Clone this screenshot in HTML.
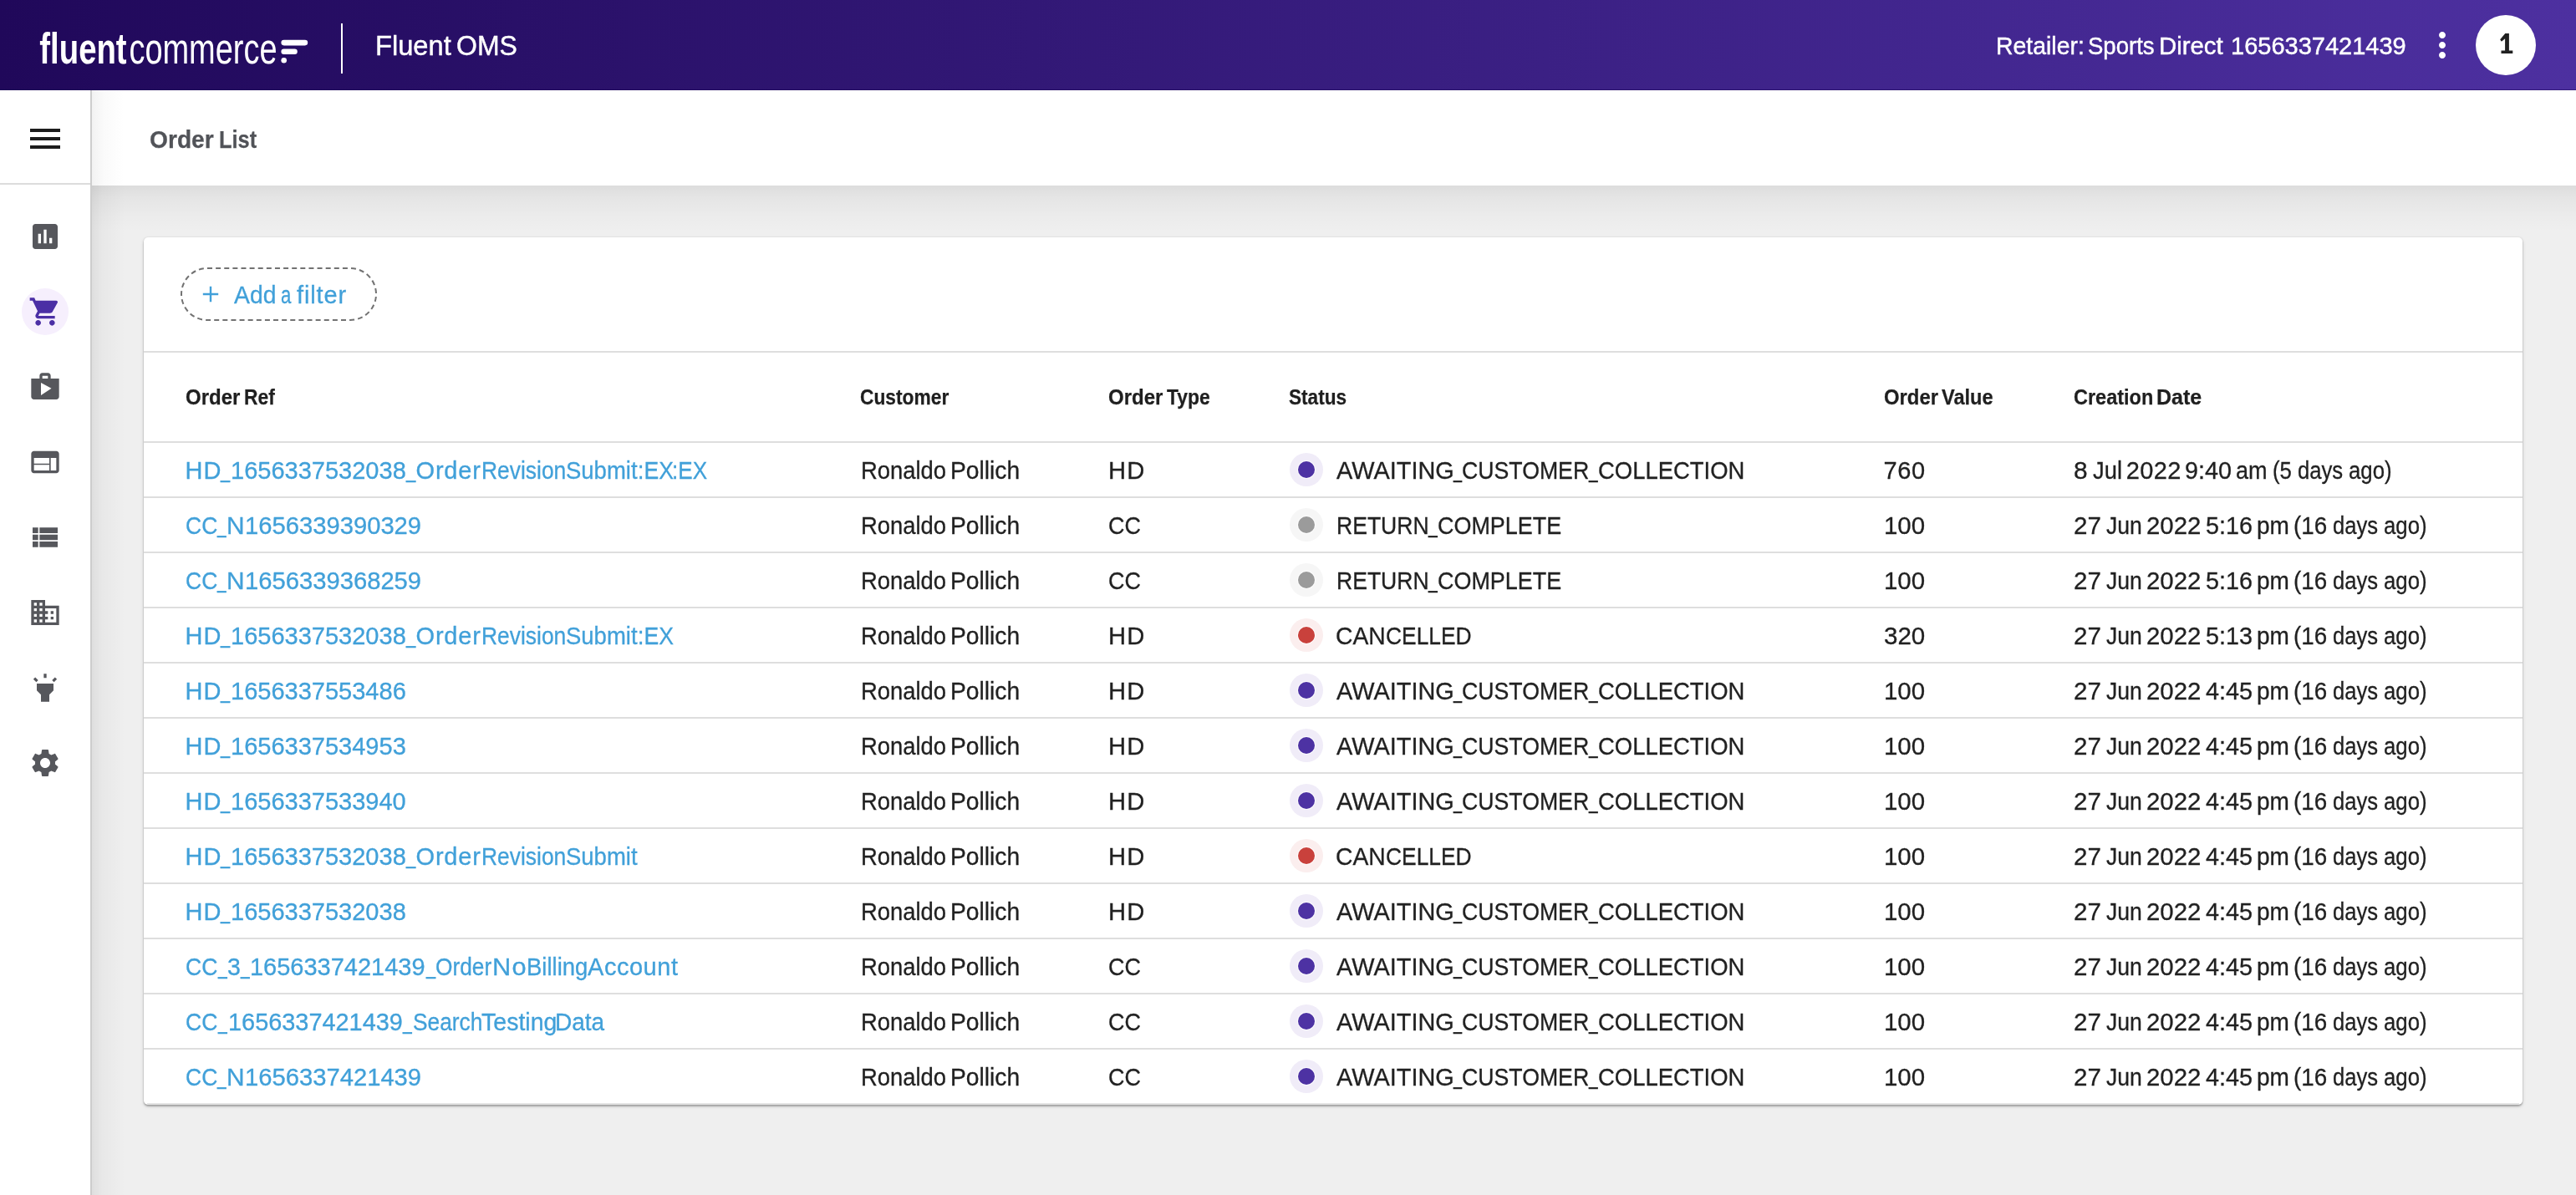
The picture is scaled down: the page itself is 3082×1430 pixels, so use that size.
<!DOCTYPE html>
  <html lang="en"><head><meta charset="utf-8"><title>Fluent OMS - Order List</title>
  <style>
  *{margin:0;padding:0;box-sizing:border-box}
  html,body{width:3082px;height:1430px;overflow:hidden;background:#efefef;font-family:"Liberation Sans",sans-serif}
  body{position:relative}
  .t{position:absolute;white-space:pre;line-height:1;display:block;transform-origin:0 0;-webkit-text-stroke:.3px currentColor}
  .t.b{-webkit-text-stroke:.25px currentColor}
.t.w{-webkit-text-stroke:.45px currentColor}
  i{position:absolute;display:block}
  #top{position:absolute;left:0;top:0;width:3082px;height:108px;background:linear-gradient(90deg,#20085a 0%,#4d30a0 100%);box-shadow:inset 0 -1px 0 rgba(20,0,80,.45)}
  #side{position:absolute;left:0;top:108px;width:110px;height:1322px;background:#fff;border-right:2px solid #cdcdcd}
  #side .mb{left:0;top:111px;width:108px;height:2px;background:#dcdcdc}
  #sub{position:absolute;left:110px;top:108px;width:2972px;height:114px;background:linear-gradient(90deg,#f2f2f2 0,#fafafa 14px,#fff 38px)}
  #main{position:absolute;left:110px;top:222px;width:2972px;height:1208px;background:
    linear-gradient(180deg,rgba(0,0,0,.08) 0,rgba(0,0,0,.045) 14px,rgba(0,0,0,.015) 36px,rgba(0,0,0,0) 56px),
    linear-gradient(90deg,rgba(0,0,0,.07) 0,rgba(0,0,0,.03) 12px,rgba(0,0,0,0) 40px),#efefef}
  #card{position:absolute;left:172px;top:284px;width:2846px;height:1038px;background:#fff;border-radius:5px;
    box-shadow:0 2px 2px rgba(0,0,0,.25),0 2px 5px rgba(0,0,0,.10),0 0 2px rgba(0,0,0,.12)}
  .ln{left:172px;width:2846px;height:2px;background:#dedede}
  .halo{left:1543px;width:40px;height:40px;border-radius:50%}
  .dot{left:1553px;width:20px;height:20px;border-radius:50%;box-shadow:0 0 0 1px rgba(255,255,255,.75)}
  .ic{position:absolute;left:34px;width:40px;height:40px}
  .sel{left:26px;width:56px;height:56px;border-radius:50%;background:#f6effd}
  #txt{position:absolute;left:0;top:0;width:3082px;height:1430px;will-change:transform;z-index:5}
  #pill{position:absolute;left:216px;top:320px;width:235px;height:64px}
  </style></head><body>
  <div id="main"></div>
  <div id="sub"></div>
  <div id="side"><i class="mb"></i></div>
  <div id="top"></div>
  <div id="card"></div>
  <i class="ln" style="top:420px"></i>
<i class="ln" style="top:1320px;left:176px;width:2838px;background:#e4e4e4"></i>

  <div id="txt">
  <!-- logo -->
  <svg style="position:absolute;left:0;top:0" width="440" height="108" viewBox="0 0 440 108">
   <g fill="#fff" font-family="Liberation Sans, sans-serif">
    <text x="0" y="0" font-size="52.6" font-weight="700" transform="translate(47.3 76.2) scale(0.729 1)">fluent</text>
    <text x="0" y="0" font-size="52.6" transform="translate(154.4 76.2) scale(0.722 1)">commerce</text>
    <rect x="336.4" y="47.8" width="31.8" height="6.6" rx="3.3"/>
    <rect x="336.4" y="58.4" width="19.4" height="6.6" rx="3.3"/>
    <circle cx="339.7" cy="72.3" r="3.3"/>
    <rect x="408" y="28" width="2" height="60"/>
   </g>
  </svg>
  <span class="t w" style="left:449.32px;top:38.04px;font-size:33.5px;transform:scaleX(0.9743);color:#fff;">Fluent</span><span class="t w" style="left:546.38px;top:38.04px;font-size:33.5px;transform:scaleX(0.9551);color:#fff;">OMS</span>
<span class="t w" style="left:2388.47px;top:40.85px;font-size:29px;transform:scaleX(0.9799);color:#fff;">Retailer:</span><span class="t w" style="left:2497.65px;top:40.85px;font-size:29px;transform:scaleX(0.9489);color:#fff;">Sports</span><span class="t w" style="left:2583.49px;top:40.85px;font-size:29px;transform:scaleX(1.0131);color:#fff;">Direct</span><span class="t w" style="left:2668.69px;top:40.85px;font-size:29px;transform:scaleX(1.0001);color:#fff;">1656337421439</span>
<span class="t b" style="left:179.44px;top:152.75px;font-size:29px;transform:scaleX(0.9721);color:#515358;font-weight:700;">Order</span><span class="t b" style="left:261.70px;top:152.75px;font-size:29px;transform:scaleX(0.8748);color:#515358;font-weight:700;">List</span>
<span class="t " style="left:280.04px;top:338.75px;font-size:29px;transform:scaleX(0.9762);color:#41a0d9;">Add</span><span class="t " style="left:336.06px;top:338.75px;font-size:29px;transform:scaleX(0.7647);color:#41a0d9;">a</span><span class="t " style="left:354.99px;top:338.75px;font-size:29px;letter-spacing:0.859px;transform:scaleX(1.0000);color:#41a0d9;">filter</span>
  <span class="t b" style="left:221.62px;top:463.14px;font-size:25px;transform:scaleX(0.9604);color:#1f1f1f;font-weight:700;">Order</span><span class="t b" style="left:292.17px;top:463.14px;font-size:25px;transform:scaleX(0.9128);color:#1f1f1f;font-weight:700;">Ref</span>
<span class="t b" style="left:1029.37px;top:463.14px;font-size:25px;transform:scaleX(0.9108);color:#1f1f1f;font-weight:700;">Customer</span>
<span class="t b" style="left:1325.81px;top:463.14px;font-size:25px;transform:scaleX(0.9612);color:#1f1f1f;font-weight:700;">Order</span><span class="t b" style="left:1395.99px;top:463.14px;font-size:25px;transform:scaleX(0.9148);color:#1f1f1f;font-weight:700;">Type</span>
<span class="t b" style="left:1541.85px;top:463.14px;font-size:25px;transform:scaleX(0.9041);color:#1f1f1f;font-weight:700;">Status</span>
<span class="t b" style="left:2253.52px;top:463.14px;font-size:25px;transform:scaleX(0.9552);color:#1f1f1f;font-weight:700;">Order</span><span class="t b" style="left:2323.44px;top:463.14px;font-size:25px;transform:scaleX(0.9424);color:#1f1f1f;font-weight:700;">Value</span>
<span class="t b" style="left:2481.04px;top:463.14px;font-size:25px;transform:scaleX(0.9400);color:#1f1f1f;font-weight:700;">Creation</span><span class="t b" style="left:2579.73px;top:463.14px;font-size:25px;transform:scaleX(0.9988);color:#1f1f1f;font-weight:700;">Date</span>
<i class="ln" style="top:528px"></i>
<span class="t " style="left:221.52px;top:548.95px;font-size:29px;letter-spacing:1.076px;transform:scaleX(1.0000);color:#41a0d9;">HD</span><span class="t " style="left:264.30px;top:547.25px;font-size:29px;transform:scaleX(0.6862);color:#41a0d9;">_</span><span class="t " style="left:275.89px;top:548.95px;font-size:29px;transform:scaleX(1.0005);color:#41a0d9;">1656337532038</span><span class="t " style="left:486.21px;top:547.25px;font-size:29px;transform:scaleX(0.6980);color:#41a0d9;">_</span><span class="t " style="left:497.53px;top:548.95px;font-size:29px;letter-spacing:0.804px;transform:scaleX(1.0000);color:#41a0d9;">Order</span><span class="t " style="left:575.93px;top:548.95px;font-size:29px;transform:scaleX(0.9107);color:#41a0d9;">Revision</span><span class="t " style="left:677.15px;top:548.95px;font-size:29px;transform:scaleX(0.9478);color:#41a0d9;">Submit</span><span class="t " style="left:762.97px;top:548.95px;font-size:29px;transform:scaleX(0.9174);color:#41a0d9;">:EX</span><span class="t " style="left:804.32px;top:548.95px;font-size:29px;transform:scaleX(0.8990);color:#41a0d9;">:EX</span>
<span class="t " style="left:1029.85px;top:548.95px;font-size:29px;transform:scaleX(0.9451);color:#212121;">Ronaldo</span><span class="t " style="left:1137.08px;top:548.95px;font-size:29px;transform:scaleX(0.9732);color:#212121;">Pollich</span>
<span class="t " style="left:1325.61px;top:548.95px;font-size:29px;letter-spacing:1.100px;transform:scaleX(1.0045);color:#212121;">HD</span>
<i class="halo" style="top:542px;background:#f0ecf8"></i><i class="dot" style="top:552px;background:#4d32a3"></i>
<span class="t " style="left:1598.84px;top:548.95px;font-size:29px;transform:scaleX(0.9970);color:#212121;">AWAITING</span><span class="t " style="left:1739.17px;top:547.25px;font-size:29px;transform:scaleX(0.6211);color:#212121;">_</span><span class="t " style="left:1749.45px;top:548.95px;font-size:29px;transform:scaleX(0.9200);color:#212121;">CUSTOMER</span><span class="t " style="left:1901.49px;top:547.25px;font-size:29px;transform:scaleX(0.6566);color:#212121;">_</span><span class="t " style="left:1911.91px;top:548.95px;font-size:29px;transform:scaleX(0.9461);color:#212121;">COLLECTION</span>
<span class="t " style="left:2253.41px;top:548.95px;font-size:29px;letter-spacing:0.715px;transform:scaleX(1.0000);color:#212121;">760</span>
<span class="t " style="left:2481.20px;top:548.95px;font-size:29px;transform:scaleX(1.0279);color:#212121;">8</span><span class="t " style="left:2503.87px;top:548.95px;font-size:29px;transform:scaleX(0.9428);color:#212121;">Jul</span><span class="t " style="left:2543.64px;top:548.95px;font-size:29px;letter-spacing:0.434px;transform:scaleX(1.0000);color:#212121;">2022</span><span class="t " style="left:2614.45px;top:548.95px;font-size:29px;transform:scaleX(0.9915);color:#212121;">9:40</span><span class="t " style="left:2675.45px;top:548.95px;font-size:29px;transform:scaleX(0.9313);color:#212121;">am</span><span class="t " style="left:2718.51px;top:548.95px;font-size:29px;transform:scaleX(0.8867);color:#212121;">(5</span><span class="t " style="left:2748.52px;top:548.95px;font-size:29px;transform:scaleX(0.8847);color:#212121;">days</span><span class="t " style="left:2809.51px;top:548.95px;font-size:29px;transform:scaleX(0.8888);color:#212121;">ago)</span>
<i class="ln" style="top:594px"></i>
<span class="t " style="left:221.66px;top:614.95px;font-size:29px;transform:scaleX(0.9132);color:#41a0d9;">CC</span><span class="t " style="left:260.49px;top:613.25px;font-size:29px;transform:scaleX(0.6566);color:#41a0d9;">_</span><span class="t " style="left:271.15px;top:614.95px;font-size:29px;transform:scaleX(1.0303);color:#41a0d9;">N</span><span class="t " style="left:292.98px;top:614.95px;font-size:29px;transform:scaleX(1.0068);color:#41a0d9;">1656339390329</span>
<span class="t " style="left:1029.85px;top:614.95px;font-size:29px;transform:scaleX(0.9451);color:#212121;">Ronaldo</span><span class="t " style="left:1137.08px;top:614.95px;font-size:29px;transform:scaleX(0.9732);color:#212121;">Pollich</span>
<span class="t " style="left:1325.83px;top:614.95px;font-size:29px;transform:scaleX(0.9284);color:#212121;">CC</span>
<i class="halo" style="top:608px;background:#f6f6f6"></i><i class="dot" style="top:618px;background:#9b9b9b"></i>
<span class="t " style="left:1598.82px;top:614.95px;font-size:29px;transform:scaleX(0.9156);color:#212121;">RETURN</span><span class="t " style="left:1709.39px;top:613.25px;font-size:29px;transform:scaleX(0.6684);color:#212121;">_</span><span class="t " style="left:1720.13px;top:614.95px;font-size:29px;transform:scaleX(0.9291);color:#212121;">COMPLETE</span>
<span class="t " style="left:2253.76px;top:614.95px;font-size:29px;transform:scaleX(1.0145);color:#212121;">100</span>
<span class="t " style="left:2481.31px;top:614.95px;font-size:29px;transform:scaleX(1.0188);color:#212121;">27</span><span class="t " style="left:2520.28px;top:614.95px;font-size:29px;transform:scaleX(0.9161);color:#212121;">Jun</span><span class="t " style="left:2568.42px;top:614.95px;font-size:29px;transform:scaleX(1.0130);color:#212121;">2022</span><span class="t " style="left:2639.15px;top:614.95px;font-size:29px;transform:scaleX(0.9904);color:#212121;">5:16</span><span class="t " style="left:2700.19px;top:614.95px;font-size:29px;transform:scaleX(0.9667);color:#212121;">pm</span><span class="t " style="left:2744.48px;top:614.95px;font-size:29px;transform:scaleX(0.9576);color:#212121;">(16</span><span class="t " style="left:2790.93px;top:614.95px;font-size:29px;transform:scaleX(0.8814);color:#212121;">days</span><span class="t " style="left:2851.81px;top:614.95px;font-size:29px;transform:scaleX(0.8888);color:#212121;">ago)</span>
<i class="ln" style="top:660px"></i>
<span class="t " style="left:221.66px;top:680.95px;font-size:29px;transform:scaleX(0.9132);color:#41a0d9;">CC</span><span class="t " style="left:260.49px;top:679.25px;font-size:29px;transform:scaleX(0.6566);color:#41a0d9;">_</span><span class="t " style="left:271.15px;top:680.95px;font-size:29px;transform:scaleX(1.0303);color:#41a0d9;">N</span><span class="t " style="left:292.98px;top:680.95px;font-size:29px;transform:scaleX(1.0068);color:#41a0d9;">1656339368259</span>
<span class="t " style="left:1029.85px;top:680.95px;font-size:29px;transform:scaleX(0.9451);color:#212121;">Ronaldo</span><span class="t " style="left:1137.08px;top:680.95px;font-size:29px;transform:scaleX(0.9732);color:#212121;">Pollich</span>
<span class="t " style="left:1325.83px;top:680.95px;font-size:29px;transform:scaleX(0.9284);color:#212121;">CC</span>
<i class="halo" style="top:674px;background:#f6f6f6"></i><i class="dot" style="top:684px;background:#9b9b9b"></i>
<span class="t " style="left:1598.82px;top:680.95px;font-size:29px;transform:scaleX(0.9156);color:#212121;">RETURN</span><span class="t " style="left:1709.39px;top:679.25px;font-size:29px;transform:scaleX(0.6684);color:#212121;">_</span><span class="t " style="left:1720.13px;top:680.95px;font-size:29px;transform:scaleX(0.9291);color:#212121;">COMPLETE</span>
<span class="t " style="left:2253.76px;top:680.95px;font-size:29px;transform:scaleX(1.0145);color:#212121;">100</span>
<span class="t " style="left:2481.31px;top:680.95px;font-size:29px;transform:scaleX(1.0188);color:#212121;">27</span><span class="t " style="left:2520.28px;top:680.95px;font-size:29px;transform:scaleX(0.9161);color:#212121;">Jun</span><span class="t " style="left:2568.42px;top:680.95px;font-size:29px;transform:scaleX(1.0130);color:#212121;">2022</span><span class="t " style="left:2639.15px;top:680.95px;font-size:29px;transform:scaleX(0.9904);color:#212121;">5:16</span><span class="t " style="left:2700.19px;top:680.95px;font-size:29px;transform:scaleX(0.9667);color:#212121;">pm</span><span class="t " style="left:2744.48px;top:680.95px;font-size:29px;transform:scaleX(0.9576);color:#212121;">(16</span><span class="t " style="left:2790.93px;top:680.95px;font-size:29px;transform:scaleX(0.8814);color:#212121;">days</span><span class="t " style="left:2851.81px;top:680.95px;font-size:29px;transform:scaleX(0.8888);color:#212121;">ago)</span>
<i class="ln" style="top:726px"></i>
<span class="t " style="left:221.52px;top:746.95px;font-size:29px;letter-spacing:1.076px;transform:scaleX(1.0000);color:#41a0d9;">HD</span><span class="t " style="left:264.30px;top:745.25px;font-size:29px;transform:scaleX(0.6862);color:#41a0d9;">_</span><span class="t " style="left:275.89px;top:746.95px;font-size:29px;transform:scaleX(1.0005);color:#41a0d9;">1656337532038</span><span class="t " style="left:486.21px;top:745.25px;font-size:29px;transform:scaleX(0.6980);color:#41a0d9;">_</span><span class="t " style="left:497.53px;top:746.95px;font-size:29px;letter-spacing:0.804px;transform:scaleX(1.0000);color:#41a0d9;">Order</span><span class="t " style="left:575.93px;top:746.95px;font-size:29px;transform:scaleX(0.9107);color:#41a0d9;">Revision</span><span class="t " style="left:677.15px;top:746.95px;font-size:29px;transform:scaleX(0.9478);color:#41a0d9;">Submit</span><span class="t " style="left:762.97px;top:746.95px;font-size:29px;transform:scaleX(0.9174);color:#41a0d9;">:EX</span>
<span class="t " style="left:1029.85px;top:746.95px;font-size:29px;transform:scaleX(0.9451);color:#212121;">Ronaldo</span><span class="t " style="left:1137.08px;top:746.95px;font-size:29px;transform:scaleX(0.9732);color:#212121;">Pollich</span>
<span class="t " style="left:1325.61px;top:746.95px;font-size:29px;letter-spacing:1.100px;transform:scaleX(1.0045);color:#212121;">HD</span>
<i class="halo" style="top:740px;background:#fbeeee"></i><i class="dot" style="top:750px;background:#c9413c"></i>
<span class="t " style="left:1598.46px;top:746.95px;font-size:29px;transform:scaleX(0.9757);color:#212121;">CAN</span><span class="t " style="left:1657.56px;top:746.95px;font-size:29px;transform:scaleX(0.9094);color:#212121;">CELLED</span>
<span class="t " style="left:2253.78px;top:746.95px;font-size:29px;transform:scaleX(1.0183);color:#212121;">320</span>
<span class="t " style="left:2481.31px;top:746.95px;font-size:29px;transform:scaleX(1.0188);color:#212121;">27</span><span class="t " style="left:2520.28px;top:746.95px;font-size:29px;transform:scaleX(0.9161);color:#212121;">Jun</span><span class="t " style="left:2568.42px;top:746.95px;font-size:29px;transform:scaleX(1.0130);color:#212121;">2022</span><span class="t " style="left:2639.15px;top:746.95px;font-size:29px;transform:scaleX(0.9904);color:#212121;">5:13</span><span class="t " style="left:2700.19px;top:746.95px;font-size:29px;transform:scaleX(0.9667);color:#212121;">pm</span><span class="t " style="left:2744.48px;top:746.95px;font-size:29px;transform:scaleX(0.9576);color:#212121;">(16</span><span class="t " style="left:2790.93px;top:746.95px;font-size:29px;transform:scaleX(0.8814);color:#212121;">days</span><span class="t " style="left:2851.81px;top:746.95px;font-size:29px;transform:scaleX(0.8888);color:#212121;">ago)</span>
<i class="ln" style="top:792px"></i>
<span class="t " style="left:221.52px;top:812.95px;font-size:29px;letter-spacing:1.076px;transform:scaleX(1.0000);color:#41a0d9;">HD</span><span class="t " style="left:264.30px;top:811.25px;font-size:29px;transform:scaleX(0.6862);color:#41a0d9;">_</span><span class="t " style="left:275.89px;top:812.95px;font-size:29px;transform:scaleX(1.0005);color:#41a0d9;">1656337553486</span>
<span class="t " style="left:1029.85px;top:812.95px;font-size:29px;transform:scaleX(0.9451);color:#212121;">Ronaldo</span><span class="t " style="left:1137.08px;top:812.95px;font-size:29px;transform:scaleX(0.9732);color:#212121;">Pollich</span>
<span class="t " style="left:1325.61px;top:812.95px;font-size:29px;letter-spacing:1.100px;transform:scaleX(1.0045);color:#212121;">HD</span>
<i class="halo" style="top:806px;background:#f0ecf8"></i><i class="dot" style="top:816px;background:#4d32a3"></i>
<span class="t " style="left:1598.84px;top:812.95px;font-size:29px;transform:scaleX(0.9970);color:#212121;">AWAITING</span><span class="t " style="left:1739.17px;top:811.25px;font-size:29px;transform:scaleX(0.6211);color:#212121;">_</span><span class="t " style="left:1749.45px;top:812.95px;font-size:29px;transform:scaleX(0.9200);color:#212121;">CUSTOMER</span><span class="t " style="left:1901.49px;top:811.25px;font-size:29px;transform:scaleX(0.6566);color:#212121;">_</span><span class="t " style="left:1911.91px;top:812.95px;font-size:29px;transform:scaleX(0.9461);color:#212121;">COLLECTION</span>
<span class="t " style="left:2253.76px;top:812.95px;font-size:29px;transform:scaleX(1.0145);color:#212121;">100</span>
<span class="t " style="left:2481.31px;top:812.95px;font-size:29px;transform:scaleX(1.0188);color:#212121;">27</span><span class="t " style="left:2520.28px;top:812.95px;font-size:29px;transform:scaleX(0.9161);color:#212121;">Jun</span><span class="t " style="left:2568.42px;top:812.95px;font-size:29px;transform:scaleX(1.0130);color:#212121;">2022</span><span class="t " style="left:2638.94px;top:812.95px;font-size:29px;transform:scaleX(0.9932);color:#212121;">4:45</span><span class="t " style="left:2700.19px;top:812.95px;font-size:29px;transform:scaleX(0.9667);color:#212121;">pm</span><span class="t " style="left:2744.48px;top:812.95px;font-size:29px;transform:scaleX(0.9576);color:#212121;">(16</span><span class="t " style="left:2790.93px;top:812.95px;font-size:29px;transform:scaleX(0.8814);color:#212121;">days</span><span class="t " style="left:2851.81px;top:812.95px;font-size:29px;transform:scaleX(0.8888);color:#212121;">ago)</span>
<i class="ln" style="top:858px"></i>
<span class="t " style="left:221.52px;top:878.95px;font-size:29px;letter-spacing:1.076px;transform:scaleX(1.0000);color:#41a0d9;">HD</span><span class="t " style="left:264.30px;top:877.25px;font-size:29px;transform:scaleX(0.6862);color:#41a0d9;">_</span><span class="t " style="left:275.89px;top:878.95px;font-size:29px;transform:scaleX(1.0005);color:#41a0d9;">1656337534953</span>
<span class="t " style="left:1029.85px;top:878.95px;font-size:29px;transform:scaleX(0.9451);color:#212121;">Ronaldo</span><span class="t " style="left:1137.08px;top:878.95px;font-size:29px;transform:scaleX(0.9732);color:#212121;">Pollich</span>
<span class="t " style="left:1325.61px;top:878.95px;font-size:29px;letter-spacing:1.100px;transform:scaleX(1.0045);color:#212121;">HD</span>
<i class="halo" style="top:872px;background:#f0ecf8"></i><i class="dot" style="top:882px;background:#4d32a3"></i>
<span class="t " style="left:1598.84px;top:878.95px;font-size:29px;transform:scaleX(0.9970);color:#212121;">AWAITING</span><span class="t " style="left:1739.17px;top:877.25px;font-size:29px;transform:scaleX(0.6211);color:#212121;">_</span><span class="t " style="left:1749.45px;top:878.95px;font-size:29px;transform:scaleX(0.9200);color:#212121;">CUSTOMER</span><span class="t " style="left:1901.49px;top:877.25px;font-size:29px;transform:scaleX(0.6566);color:#212121;">_</span><span class="t " style="left:1911.91px;top:878.95px;font-size:29px;transform:scaleX(0.9461);color:#212121;">COLLECTION</span>
<span class="t " style="left:2253.76px;top:878.95px;font-size:29px;transform:scaleX(1.0145);color:#212121;">100</span>
<span class="t " style="left:2481.31px;top:878.95px;font-size:29px;transform:scaleX(1.0188);color:#212121;">27</span><span class="t " style="left:2520.28px;top:878.95px;font-size:29px;transform:scaleX(0.9161);color:#212121;">Jun</span><span class="t " style="left:2568.42px;top:878.95px;font-size:29px;transform:scaleX(1.0130);color:#212121;">2022</span><span class="t " style="left:2638.94px;top:878.95px;font-size:29px;transform:scaleX(0.9932);color:#212121;">4:45</span><span class="t " style="left:2700.19px;top:878.95px;font-size:29px;transform:scaleX(0.9667);color:#212121;">pm</span><span class="t " style="left:2744.48px;top:878.95px;font-size:29px;transform:scaleX(0.9576);color:#212121;">(16</span><span class="t " style="left:2790.93px;top:878.95px;font-size:29px;transform:scaleX(0.8814);color:#212121;">days</span><span class="t " style="left:2851.81px;top:878.95px;font-size:29px;transform:scaleX(0.8888);color:#212121;">ago)</span>
<i class="ln" style="top:924px"></i>
<span class="t " style="left:221.52px;top:944.95px;font-size:29px;letter-spacing:1.076px;transform:scaleX(1.0000);color:#41a0d9;">HD</span><span class="t " style="left:264.30px;top:943.25px;font-size:29px;transform:scaleX(0.6862);color:#41a0d9;">_</span><span class="t " style="left:275.89px;top:944.95px;font-size:29px;transform:scaleX(0.9999);color:#41a0d9;">1656337533940</span>
<span class="t " style="left:1029.85px;top:944.95px;font-size:29px;transform:scaleX(0.9451);color:#212121;">Ronaldo</span><span class="t " style="left:1137.08px;top:944.95px;font-size:29px;transform:scaleX(0.9732);color:#212121;">Pollich</span>
<span class="t " style="left:1325.61px;top:944.95px;font-size:29px;letter-spacing:1.100px;transform:scaleX(1.0045);color:#212121;">HD</span>
<i class="halo" style="top:938px;background:#f0ecf8"></i><i class="dot" style="top:948px;background:#4d32a3"></i>
<span class="t " style="left:1598.84px;top:944.95px;font-size:29px;transform:scaleX(0.9970);color:#212121;">AWAITING</span><span class="t " style="left:1739.17px;top:943.25px;font-size:29px;transform:scaleX(0.6211);color:#212121;">_</span><span class="t " style="left:1749.45px;top:944.95px;font-size:29px;transform:scaleX(0.9200);color:#212121;">CUSTOMER</span><span class="t " style="left:1901.49px;top:943.25px;font-size:29px;transform:scaleX(0.6566);color:#212121;">_</span><span class="t " style="left:1911.91px;top:944.95px;font-size:29px;transform:scaleX(0.9461);color:#212121;">COLLECTION</span>
<span class="t " style="left:2253.76px;top:944.95px;font-size:29px;transform:scaleX(1.0145);color:#212121;">100</span>
<span class="t " style="left:2481.31px;top:944.95px;font-size:29px;transform:scaleX(1.0188);color:#212121;">27</span><span class="t " style="left:2520.28px;top:944.95px;font-size:29px;transform:scaleX(0.9161);color:#212121;">Jun</span><span class="t " style="left:2568.42px;top:944.95px;font-size:29px;transform:scaleX(1.0130);color:#212121;">2022</span><span class="t " style="left:2638.94px;top:944.95px;font-size:29px;transform:scaleX(0.9932);color:#212121;">4:45</span><span class="t " style="left:2700.19px;top:944.95px;font-size:29px;transform:scaleX(0.9667);color:#212121;">pm</span><span class="t " style="left:2744.48px;top:944.95px;font-size:29px;transform:scaleX(0.9576);color:#212121;">(16</span><span class="t " style="left:2790.93px;top:944.95px;font-size:29px;transform:scaleX(0.8814);color:#212121;">days</span><span class="t " style="left:2851.81px;top:944.95px;font-size:29px;transform:scaleX(0.8888);color:#212121;">ago)</span>
<i class="ln" style="top:990px"></i>
<span class="t " style="left:221.52px;top:1010.95px;font-size:29px;letter-spacing:1.076px;transform:scaleX(1.0000);color:#41a0d9;">HD</span><span class="t " style="left:264.30px;top:1009.25px;font-size:29px;transform:scaleX(0.6862);color:#41a0d9;">_</span><span class="t " style="left:275.89px;top:1010.95px;font-size:29px;transform:scaleX(1.0005);color:#41a0d9;">1656337532038</span><span class="t " style="left:486.21px;top:1009.25px;font-size:29px;transform:scaleX(0.6980);color:#41a0d9;">_</span><span class="t " style="left:497.53px;top:1010.95px;font-size:29px;letter-spacing:0.804px;transform:scaleX(1.0000);color:#41a0d9;">Order</span><span class="t " style="left:575.93px;top:1010.95px;font-size:29px;transform:scaleX(0.9107);color:#41a0d9;">Revision</span><span class="t " style="left:677.15px;top:1010.95px;font-size:29px;transform:scaleX(0.9478);color:#41a0d9;">Submit</span>
<span class="t " style="left:1029.85px;top:1010.95px;font-size:29px;transform:scaleX(0.9451);color:#212121;">Ronaldo</span><span class="t " style="left:1137.08px;top:1010.95px;font-size:29px;transform:scaleX(0.9732);color:#212121;">Pollich</span>
<span class="t " style="left:1325.61px;top:1010.95px;font-size:29px;letter-spacing:1.100px;transform:scaleX(1.0045);color:#212121;">HD</span>
<i class="halo" style="top:1004px;background:#fbeeee"></i><i class="dot" style="top:1014px;background:#c9413c"></i>
<span class="t " style="left:1598.46px;top:1010.95px;font-size:29px;transform:scaleX(0.9757);color:#212121;">CAN</span><span class="t " style="left:1657.56px;top:1010.95px;font-size:29px;transform:scaleX(0.9094);color:#212121;">CELLED</span>
<span class="t " style="left:2253.76px;top:1010.95px;font-size:29px;transform:scaleX(1.0145);color:#212121;">100</span>
<span class="t " style="left:2481.31px;top:1010.95px;font-size:29px;transform:scaleX(1.0188);color:#212121;">27</span><span class="t " style="left:2520.28px;top:1010.95px;font-size:29px;transform:scaleX(0.9161);color:#212121;">Jun</span><span class="t " style="left:2568.42px;top:1010.95px;font-size:29px;transform:scaleX(1.0130);color:#212121;">2022</span><span class="t " style="left:2638.94px;top:1010.95px;font-size:29px;transform:scaleX(0.9932);color:#212121;">4:45</span><span class="t " style="left:2700.19px;top:1010.95px;font-size:29px;transform:scaleX(0.9667);color:#212121;">pm</span><span class="t " style="left:2744.48px;top:1010.95px;font-size:29px;transform:scaleX(0.9576);color:#212121;">(16</span><span class="t " style="left:2790.93px;top:1010.95px;font-size:29px;transform:scaleX(0.8814);color:#212121;">days</span><span class="t " style="left:2851.81px;top:1010.95px;font-size:29px;transform:scaleX(0.8888);color:#212121;">ago)</span>
<i class="ln" style="top:1056px"></i>
<span class="t " style="left:221.52px;top:1076.95px;font-size:29px;letter-spacing:1.076px;transform:scaleX(1.0000);color:#41a0d9;">HD</span><span class="t " style="left:264.30px;top:1075.25px;font-size:29px;transform:scaleX(0.6862);color:#41a0d9;">_</span><span class="t " style="left:275.89px;top:1076.95px;font-size:29px;transform:scaleX(1.0005);color:#41a0d9;">1656337532038</span>
<span class="t " style="left:1029.85px;top:1076.95px;font-size:29px;transform:scaleX(0.9451);color:#212121;">Ronaldo</span><span class="t " style="left:1137.08px;top:1076.95px;font-size:29px;transform:scaleX(0.9732);color:#212121;">Pollich</span>
<span class="t " style="left:1325.61px;top:1076.95px;font-size:29px;letter-spacing:1.100px;transform:scaleX(1.0045);color:#212121;">HD</span>
<i class="halo" style="top:1070px;background:#f0ecf8"></i><i class="dot" style="top:1080px;background:#4d32a3"></i>
<span class="t " style="left:1598.84px;top:1076.95px;font-size:29px;transform:scaleX(0.9970);color:#212121;">AWAITING</span><span class="t " style="left:1739.17px;top:1075.25px;font-size:29px;transform:scaleX(0.6211);color:#212121;">_</span><span class="t " style="left:1749.45px;top:1076.95px;font-size:29px;transform:scaleX(0.9200);color:#212121;">CUSTOMER</span><span class="t " style="left:1901.49px;top:1075.25px;font-size:29px;transform:scaleX(0.6566);color:#212121;">_</span><span class="t " style="left:1911.91px;top:1076.95px;font-size:29px;transform:scaleX(0.9461);color:#212121;">COLLECTION</span>
<span class="t " style="left:2253.76px;top:1076.95px;font-size:29px;transform:scaleX(1.0145);color:#212121;">100</span>
<span class="t " style="left:2481.31px;top:1076.95px;font-size:29px;transform:scaleX(1.0188);color:#212121;">27</span><span class="t " style="left:2520.28px;top:1076.95px;font-size:29px;transform:scaleX(0.9161);color:#212121;">Jun</span><span class="t " style="left:2568.42px;top:1076.95px;font-size:29px;transform:scaleX(1.0130);color:#212121;">2022</span><span class="t " style="left:2638.94px;top:1076.95px;font-size:29px;transform:scaleX(0.9932);color:#212121;">4:45</span><span class="t " style="left:2700.19px;top:1076.95px;font-size:29px;transform:scaleX(0.9667);color:#212121;">pm</span><span class="t " style="left:2744.48px;top:1076.95px;font-size:29px;transform:scaleX(0.9576);color:#212121;">(16</span><span class="t " style="left:2790.93px;top:1076.95px;font-size:29px;transform:scaleX(0.8814);color:#212121;">days</span><span class="t " style="left:2851.81px;top:1076.95px;font-size:29px;transform:scaleX(0.8888);color:#212121;">ago)</span>
<i class="ln" style="top:1122px"></i>
<span class="t " style="left:221.75px;top:1142.95px;font-size:29px;transform:scaleX(0.9157);color:#41a0d9;">CC</span><span class="t " style="left:260.59px;top:1141.25px;font-size:29px;transform:scaleX(0.6684);color:#41a0d9;">_</span><span class="t " style="left:272.42px;top:1142.95px;font-size:29px;transform:scaleX(0.9810);color:#41a0d9;">3</span><span class="t " style="left:287.99px;top:1141.25px;font-size:29px;transform:scaleX(0.6625);color:#41a0d9;">_</span><span class="t " style="left:299.49px;top:1142.95px;font-size:29px;transform:scaleX(0.9996);color:#41a0d9;">1656337421439</span><span class="t " style="left:509.50px;top:1141.25px;font-size:29px;transform:scaleX(0.6862);color:#41a0d9;">_</span><span class="t " style="left:521.46px;top:1142.95px;font-size:29px;transform:scaleX(0.9061);color:#41a0d9;">Order</span><span class="t " style="left:588.78px;top:1142.95px;font-size:29px;letter-spacing:1.100px;transform:scaleX(1.0613);color:#41a0d9;">No</span><span class="t " style="left:629.74px;top:1142.95px;font-size:29px;transform:scaleX(0.9490);color:#41a0d9;">Billing</span><span class="t " style="left:703.04px;top:1142.95px;font-size:29px;letter-spacing:0.529px;transform:scaleX(1.0000);color:#41a0d9;">Account</span>
<span class="t " style="left:1029.85px;top:1142.95px;font-size:29px;transform:scaleX(0.9451);color:#212121;">Ronaldo</span><span class="t " style="left:1137.08px;top:1142.95px;font-size:29px;transform:scaleX(0.9732);color:#212121;">Pollich</span>
<span class="t " style="left:1325.83px;top:1142.95px;font-size:29px;transform:scaleX(0.9284);color:#212121;">CC</span>
<i class="halo" style="top:1136px;background:#f0ecf8"></i><i class="dot" style="top:1146px;background:#4d32a3"></i>
<span class="t " style="left:1598.84px;top:1142.95px;font-size:29px;transform:scaleX(0.9970);color:#212121;">AWAITING</span><span class="t " style="left:1739.17px;top:1141.25px;font-size:29px;transform:scaleX(0.6211);color:#212121;">_</span><span class="t " style="left:1749.45px;top:1142.95px;font-size:29px;transform:scaleX(0.9200);color:#212121;">CUSTOMER</span><span class="t " style="left:1901.49px;top:1141.25px;font-size:29px;transform:scaleX(0.6566);color:#212121;">_</span><span class="t " style="left:1911.91px;top:1142.95px;font-size:29px;transform:scaleX(0.9461);color:#212121;">COLLECTION</span>
<span class="t " style="left:2253.76px;top:1142.95px;font-size:29px;transform:scaleX(1.0145);color:#212121;">100</span>
<span class="t " style="left:2481.31px;top:1142.95px;font-size:29px;transform:scaleX(1.0188);color:#212121;">27</span><span class="t " style="left:2520.28px;top:1142.95px;font-size:29px;transform:scaleX(0.9161);color:#212121;">Jun</span><span class="t " style="left:2568.42px;top:1142.95px;font-size:29px;transform:scaleX(1.0130);color:#212121;">2022</span><span class="t " style="left:2638.94px;top:1142.95px;font-size:29px;transform:scaleX(0.9932);color:#212121;">4:45</span><span class="t " style="left:2700.19px;top:1142.95px;font-size:29px;transform:scaleX(0.9667);color:#212121;">pm</span><span class="t " style="left:2744.48px;top:1142.95px;font-size:29px;transform:scaleX(0.9576);color:#212121;">(16</span><span class="t " style="left:2790.93px;top:1142.95px;font-size:29px;transform:scaleX(0.8814);color:#212121;">days</span><span class="t " style="left:2851.81px;top:1142.95px;font-size:29px;transform:scaleX(0.8888);color:#212121;">ago)</span>
<i class="ln" style="top:1188px"></i>
<span class="t " style="left:221.75px;top:1208.95px;font-size:29px;transform:scaleX(0.9157);color:#41a0d9;">CC</span><span class="t " style="left:260.59px;top:1207.25px;font-size:29px;transform:scaleX(0.6684);color:#41a0d9;">_</span><span class="t " style="left:272.50px;top:1208.95px;font-size:29px;transform:scaleX(0.9962);color:#41a0d9;">1656337421439</span><span class="t " style="left:481.99px;top:1207.25px;font-size:29px;transform:scaleX(0.6684);color:#41a0d9;">_</span><span class="t " style="left:493.50px;top:1208.95px;font-size:29px;transform:scaleX(0.9077);color:#41a0d9;">Search</span><span class="t " style="left:575.76px;top:1208.95px;font-size:29px;transform:scaleX(0.9836);color:#41a0d9;">Testing</span><span class="t " style="left:664.30px;top:1208.95px;font-size:29px;transform:scaleX(0.9663);color:#41a0d9;">Data</span>
<span class="t " style="left:1029.85px;top:1208.95px;font-size:29px;transform:scaleX(0.9451);color:#212121;">Ronaldo</span><span class="t " style="left:1137.08px;top:1208.95px;font-size:29px;transform:scaleX(0.9732);color:#212121;">Pollich</span>
<span class="t " style="left:1325.83px;top:1208.95px;font-size:29px;transform:scaleX(0.9284);color:#212121;">CC</span>
<i class="halo" style="top:1202px;background:#f0ecf8"></i><i class="dot" style="top:1212px;background:#4d32a3"></i>
<span class="t " style="left:1598.84px;top:1208.95px;font-size:29px;transform:scaleX(0.9970);color:#212121;">AWAITING</span><span class="t " style="left:1739.17px;top:1207.25px;font-size:29px;transform:scaleX(0.6211);color:#212121;">_</span><span class="t " style="left:1749.45px;top:1208.95px;font-size:29px;transform:scaleX(0.9200);color:#212121;">CUSTOMER</span><span class="t " style="left:1901.49px;top:1207.25px;font-size:29px;transform:scaleX(0.6566);color:#212121;">_</span><span class="t " style="left:1911.91px;top:1208.95px;font-size:29px;transform:scaleX(0.9461);color:#212121;">COLLECTION</span>
<span class="t " style="left:2253.76px;top:1208.95px;font-size:29px;transform:scaleX(1.0145);color:#212121;">100</span>
<span class="t " style="left:2481.31px;top:1208.95px;font-size:29px;transform:scaleX(1.0188);color:#212121;">27</span><span class="t " style="left:2520.28px;top:1208.95px;font-size:29px;transform:scaleX(0.9161);color:#212121;">Jun</span><span class="t " style="left:2568.42px;top:1208.95px;font-size:29px;transform:scaleX(1.0130);color:#212121;">2022</span><span class="t " style="left:2638.94px;top:1208.95px;font-size:29px;transform:scaleX(0.9932);color:#212121;">4:45</span><span class="t " style="left:2700.19px;top:1208.95px;font-size:29px;transform:scaleX(0.9667);color:#212121;">pm</span><span class="t " style="left:2744.48px;top:1208.95px;font-size:29px;transform:scaleX(0.9576);color:#212121;">(16</span><span class="t " style="left:2790.93px;top:1208.95px;font-size:29px;transform:scaleX(0.8814);color:#212121;">days</span><span class="t " style="left:2851.81px;top:1208.95px;font-size:29px;transform:scaleX(0.8888);color:#212121;">ago)</span>
<i class="ln" style="top:1254px"></i>
<span class="t " style="left:221.66px;top:1274.95px;font-size:29px;transform:scaleX(0.9132);color:#41a0d9;">CC</span><span class="t " style="left:260.49px;top:1273.25px;font-size:29px;transform:scaleX(0.6566);color:#41a0d9;">_</span><span class="t " style="left:271.15px;top:1274.95px;font-size:29px;transform:scaleX(1.0303);color:#41a0d9;">N</span><span class="t " style="left:292.98px;top:1274.95px;font-size:29px;transform:scaleX(1.0068);color:#41a0d9;">1656337421439</span>
<span class="t " style="left:1029.85px;top:1274.95px;font-size:29px;transform:scaleX(0.9451);color:#212121;">Ronaldo</span><span class="t " style="left:1137.08px;top:1274.95px;font-size:29px;transform:scaleX(0.9732);color:#212121;">Pollich</span>
<span class="t " style="left:1325.83px;top:1274.95px;font-size:29px;transform:scaleX(0.9284);color:#212121;">CC</span>
<i class="halo" style="top:1268px;background:#f0ecf8"></i><i class="dot" style="top:1278px;background:#4d32a3"></i>
<span class="t " style="left:1598.84px;top:1274.95px;font-size:29px;transform:scaleX(0.9970);color:#212121;">AWAITING</span><span class="t " style="left:1739.17px;top:1273.25px;font-size:29px;transform:scaleX(0.6211);color:#212121;">_</span><span class="t " style="left:1749.45px;top:1274.95px;font-size:29px;transform:scaleX(0.9200);color:#212121;">CUSTOMER</span><span class="t " style="left:1901.49px;top:1273.25px;font-size:29px;transform:scaleX(0.6566);color:#212121;">_</span><span class="t " style="left:1911.91px;top:1274.95px;font-size:29px;transform:scaleX(0.9461);color:#212121;">COLLECTION</span>
<span class="t " style="left:2253.76px;top:1274.95px;font-size:29px;transform:scaleX(1.0145);color:#212121;">100</span>
<span class="t " style="left:2481.31px;top:1274.95px;font-size:29px;transform:scaleX(1.0188);color:#212121;">27</span><span class="t " style="left:2520.28px;top:1274.95px;font-size:29px;transform:scaleX(0.9161);color:#212121;">Jun</span><span class="t " style="left:2568.42px;top:1274.95px;font-size:29px;transform:scaleX(1.0130);color:#212121;">2022</span><span class="t " style="left:2638.94px;top:1274.95px;font-size:29px;transform:scaleX(0.9932);color:#212121;">4:45</span><span class="t " style="left:2700.19px;top:1274.95px;font-size:29px;transform:scaleX(0.9667);color:#212121;">pm</span><span class="t " style="left:2744.48px;top:1274.95px;font-size:29px;transform:scaleX(0.9576);color:#212121;">(16</span><span class="t " style="left:2790.93px;top:1274.95px;font-size:29px;transform:scaleX(0.8814);color:#212121;">days</span><span class="t " style="left:2851.81px;top:1274.95px;font-size:29px;transform:scaleX(0.8888);color:#212121;">ago)</span>
  </div>

  <!-- hamburger -->
  <svg style="position:absolute;left:30px;top:142px" width="48" height="48" viewBox="0 0 24 24"><path fill="#1c1c1c" d="M3 18h18v-2H3v2zm0-5h18v-2H3v2zm0-7v2h18V6H3z"/></svg>
  <svg class="ic" style="top:263px" viewBox="0 0 24 24"><path fill="#56575c" d="M19 3H5c-1.1 0-2 .9-2 2v14c0 1.1.9 2 2 2h14c1.1 0 2-.9 2-2V5c0-1.1-.9-2-2-2zM9 17H7v-7h2v7zm4 0h-2V7h2v10zm4 0h-2v-4h2v4z"/></svg>
<i class="sel" style="top:345px"></i>
<svg class="ic" style="top:353px" viewBox="0 0 24 24"><path fill="#4b2fa5" d="M7 18c-1.1 0-1.99.9-1.99 2S5.9 22 7 22s2-.9 2-2-.9-2-2-2zM1 2v2h2l3.6 7.59-1.35 2.45c-.16.28-.25.61-.25.96 0 1.1.9 2 2 2h12v-2H7.42c-.14 0-.25-.11-.25-.25l.03-.12.9-1.63h7.45c.75 0 1.41-.41 1.75-1.03l3.58-6.49c.08-.14.12-.31.12-.48 0-.55-.45-1-1-1H5.21l-.94-2H1zm16 16c-1.1 0-1.99.9-1.99 2s.89 2 1.99 2 2-.9 2-2-.9-2-2-2z"/></svg>
<svg class="ic" style="top:443px" viewBox="0 0 24 24"><path fill="#56575c" d="M16 6V4c0-1.11-.89-2-2-2h-4c-1.11 0-2 .89-2 2v2H2v13c0 1.11.89 2 2 2h16c1.11 0 2-.89 2-2V6h-6zm-6-2h4v2h-4V4zM9 18V9l7.5 4L9 18z"/></svg>
<svg class="ic" style="top:533px" viewBox="0 0 24 24"><path fill="#56575c" d="M20 4H4c-1.1 0-1.99.9-1.99 2L2 18c0 1.1.9 2 2 2h16c1.1 0 2-.9 2-2V6c0-1.1-.9-2-2-2zm-5 14H4v-4h11v4zm0-5H4V9h11v4zm5 5h-4V9h4v9z"/></svg>
<svg class="ic" style="top:623px" viewBox="0 0 24 24"><path fill="#56575c" d="M3 14h4v-4H3v4zm0 5h4v-4H3v4zM3 9h4V5H3v4zm5 5h13v-4H8v4zm0 5h13v-4H8v4zM8 5v4h13V5H8z"/></svg>
<svg class="ic" style="top:713px" viewBox="0 0 24 24"><path fill="#56575c" d="M12 7V3H2v18h20V7H12zM6 19H4v-2h2v2zm0-4H4v-2h2v2zm0-4H4V9h2v2zm0-4H4V5h2v2zm4 12H8v-2h2v2zm0-4H8v-2h2v2zm0-4H8V9h2v2zm0-4H8V5h2v2zm10 12h-8v-2h2v-2h-2v-2h2v-2h-2V9h8v10zm-2-8h-2v2h2v-2zm0 4h-2v2h2v-2z"/></svg>
<svg class="ic" style="top:803px" viewBox="0 0 24 24"><path fill="#56575c" d="M6 14l3 3v5h6v-5l3-3V9H6v5zm5-12h2v3h-2V2zM3.5 5.88l1.41-1.41 2.12 2.12L5.62 8 3.5 5.88zm13.46.71l2.12-2.12 1.41 1.41L18.38 8l-1.42-1.41z"/></svg>
<svg class="ic" style="top:893px" viewBox="0 0 24 24"><path fill="#56575c" d="M19.14 12.94c.04-.3.06-.61.06-.94 0-.32-.02-.64-.07-.94l2.03-1.58c.18-.14.23-.41.12-.61l-1.92-3.32c-.12-.22-.37-.29-.59-.22l-2.39.96c-.5-.38-1.03-.7-1.62-.94l-.36-2.54c-.04-.24-.24-.41-.48-.41h-3.84c-.24 0-.43.17-.47.41l-.36 2.54c-.59.24-1.13.57-1.62.94l-2.39-.96c-.22-.08-.47 0-.59.22L2.74 8.87c-.12.21-.08.47.12.61l2.03 1.58c-.05.3-.09.63-.09.94s.02.64.07.94l-2.03 1.58c-.18.14-.23.41-.12.61l1.92 3.32c.12.22.37.29.59.22l2.39-.96c.5.38 1.03.7 1.62.94l.36 2.54c.05.24.24.41.48.41h3.84c.24 0 .44-.17.47-.41l.36-2.54c.59-.24 1.13-.56 1.62-.94l2.39.96c.22.08.47 0 .59-.22l1.92-3.32c.12-.22.07-.47-.12-.61l-2.01-1.58zM12 15.6c-1.98 0-3.6-1.62-3.6-3.6s1.62-3.6 3.6-3.6 3.6 1.62 3.6 3.6-1.62 3.6-3.6 3.6z"/></svg>

  <!-- header right -->
  <svg style="position:absolute;left:2898px;top:30px" width="48" height="48" viewBox="0 0 24 24"><path fill="#fff" d="M12 8c1.1 0 2-.9 2-2s-.9-2-2-2-2 .9-2 2 .9 2 2 2zm0 2c-1.1 0-2 .9-2 2s.9 2 2 2 2-.9 2-2-.9-2-2-2zm0 6c-1.1 0-2 .9-2 2s.9 2 2 2 2-.9 2-2-.9-2-2-2z"/></svg>
  <i style="left:2962px;top:18px;width:72px;height:72px;border-radius:50%;background:#fff"></i>
  <svg style="position:absolute;left:2980px;top:30px" width="40" height="44" viewBox="2980 30 40 44"><path fill="#212121" d="M2997.3 40h4.6v20.6h4.4V64h-13.8v-3.4h4.6V46.3l-3.3 2.8a1 1 0 0 1-1.5-.2l-1.1-1.6z"/></svg>

  <!-- filter pill -->
  <svg id="pill" viewBox="0 0 235 64"><rect x="1" y="1" width="233" height="62" rx="31" fill="none" stroke="#727272" stroke-width="2" stroke-dasharray="6 4.12"/>
   <path d="M26.8 32h18.4M36 22.8v18.4" stroke="#41a0d9" stroke-width="2.4" fill="none"/></svg>

  </body></html>
